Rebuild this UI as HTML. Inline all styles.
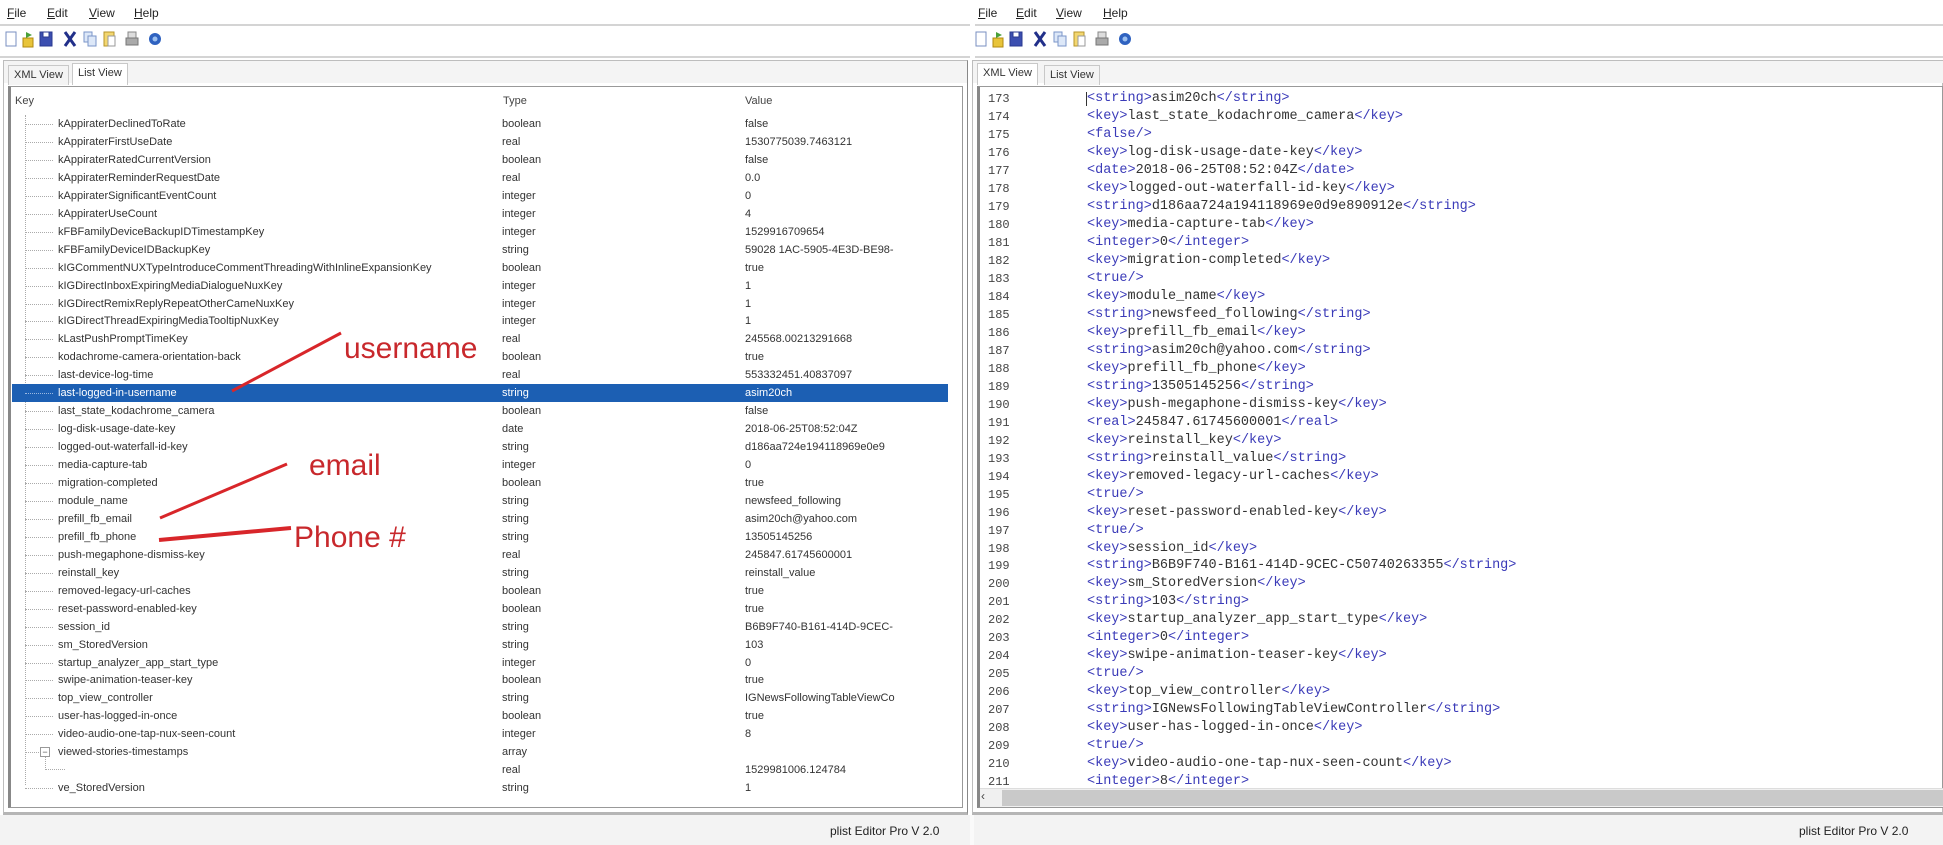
<!DOCTYPE html>
<html><head><meta charset="utf-8">
<style>
*{margin:0;padding:0;box-sizing:border-box}
body{width:1943px;height:845px;background:#fff;position:relative;overflow:hidden;font-family:"Liberation Sans",sans-serif;color:#222}
.abs{position:absolute}
.menu{font-size:12px;color:#222;top:6px}
.menu u{text-decoration:underline}
.sep{height:2px;background:#d4d4d4}
.tab{position:absolute;font-size:11px;height:20px;line-height:18px;padding:0 5px;border:1px solid #c8c8c8;border-bottom:none;background:#f4f4f4;color:#333}
.tab.act{background:#fff}
.row{position:absolute;left:0;height:18px;line-height:18px;font-size:11px;color:#333;white-space:nowrap;width:955px}
.row .k{position:absolute;left:58px}
.row .t{position:absolute;left:502px}
.row .v{position:absolute;left:745px}
.row .ln{position:absolute;left:25px;top:9px;width:28px;border-top:1px dotted #aaa}
.row.sel{background:#1c5fb3;color:#fff;left:12px;width:936px}
.row.sel .k{left:46px}.row.sel .t{left:490px}.row.sel .v{left:733px}.row.sel .ln{left:13px;border-color:#9bb8e0}
.cl{position:absolute;height:18px;line-height:18px;font-family:"Liberation Mono",monospace;font-size:13.5px;white-space:nowrap}
.cl .n{position:absolute;left:0;color:#444;font-size:12px}
.cl .c{position:absolute;left:99px;color:#333}
.g{color:#3a3ab8}
.status{font-size:12px;color:#222}
</style></head><body>

<div class="abs menu" style="left:7px"><u>F</u>ile</div>
<div class="abs menu" style="left:47px"><u>E</u>dit</div>
<div class="abs menu" style="left:89px"><u>V</u>iew</div>
<div class="abs menu" style="left:134px"><u>H</u>elp</div>
<div class="abs sep" style="left:0;top:24px;width:970px"></div>
<div class="abs sep" style="left:0;top:56px;width:970px"></div>

<div class="abs menu" style="left:978px"><u>F</u>ile</div>
<div class="abs menu" style="left:1016px"><u>E</u>dit</div>
<div class="abs menu" style="left:1056px"><u>V</u>iew</div>
<div class="abs menu" style="left:1103px"><u>H</u>elp</div>
<div class="abs sep" style="left:975px;top:24px;width:968px"></div>
<div class="abs sep" style="left:975px;top:56px;width:968px"></div>

<svg class="abs" style="left:0;top:28px" width="1943" height="24">
 <g id="tbg">
  <rect x="6" y="4" width="10" height="14" fill="#fff" stroke="#7a8fc0"/>
  <path d="M23 10 h10 v9 h-10z" fill="#e8c43a" stroke="#b08a10"/><path d="M26 4 l6 3 -6 3z" fill="#4aa03a"/>
  <path d="M40 4 h12 v14 h-12z M43 4 v5 h6 v-5" fill="#3c4fb0" stroke="#2a3a90"/>
  <path d="M65 4 l10 14 M75 4 l-10 14" stroke="#22308a" stroke-width="3"/>
  <rect x="84" y="4" width="8" height="10" fill="#dde8f8" stroke="#7a95c8"/><rect x="88" y="8" width="8" height="10" fill="#dde8f8" stroke="#7a95c8"/>
  <rect x="104" y="4" width="10" height="14" fill="#f3d770" stroke="#b7962a"/><rect x="108" y="8" width="7" height="10" fill="#fff" stroke="#999"/>
  <rect x="128" y="4" width="8" height="6" fill="#ddd" stroke="#888"/><rect x="126" y="10" width="12" height="7" fill="#aaa" stroke="#777"/>
  <circle cx="155" cy="11" r="6" fill="#2f62c0"/><circle cx="155" cy="11" r="2.5" fill="#9cc0f0"/>
 </g>
 <use href="#tbg" x="970"/>
</svg>

<div class="abs" style="left:3px;top:60px;width:965px;height:755px;border:1px solid #bdbdbd;border-right-color:#888;border-bottom:3px solid #b5b5b5"></div>
<div class="abs" style="left:4px;top:61px;width:963px;height:22px;background:#f4f4f4"></div>
<div class="tab" style="left:8px;top:65px">XML View</div>
<div class="tab act" style="left:72px;top:63px;height:22px">List View</div>
<div class="abs" style="left:8px;top:86px;width:955px;height:722px;border:1px solid #999;border-left:3px solid #888;background:#fff"></div>
<div class="abs" style="left:15px;top:95px;font-size:11px;color:#444">Key</div>
<div class="abs" style="left:503px;top:95px;font-size:11px;color:#444">Type</div>
<div class="abs" style="left:745px;top:95px;font-size:11px;color:#444">Value</div>
<div class="abs" style="left:25px;top:115px;width:0;height:670px;border-left:1px dotted #aaa"></div>

<div class="abs" style="left:0;top:115px;width:960px;height:690px">
<div class="row" style="top:0px"><span class="ln"></span><span class="k">kAppiraterDeclinedToRate</span><span class="t">boolean</span><span class="v">false</span></div>
<div class="row" style="top:17.95px"><span class="ln"></span><span class="k">kAppiraterFirstUseDate</span><span class="t">real</span><span class="v">1530775039.7463121</span></div>
<div class="row" style="top:35.9px"><span class="ln"></span><span class="k">kAppiraterRatedCurrentVersion</span><span class="t">boolean</span><span class="v">false</span></div>
<div class="row" style="top:53.85px"><span class="ln"></span><span class="k">kAppiraterReminderRequestDate</span><span class="t">real</span><span class="v">0.0</span></div>
<div class="row" style="top:71.8px"><span class="ln"></span><span class="k">kAppiraterSignificantEventCount</span><span class="t">integer</span><span class="v">0</span></div>
<div class="row" style="top:89.75px"><span class="ln"></span><span class="k">kAppiraterUseCount</span><span class="t">integer</span><span class="v">4</span></div>
<div class="row" style="top:107.7px"><span class="ln"></span><span class="k">kFBFamilyDeviceBackupIDTimestampKey</span><span class="t">integer</span><span class="v">1529916709654</span></div>
<div class="row" style="top:125.65px"><span class="ln"></span><span class="k">kFBFamilyDeviceIDBackupKey</span><span class="t">string</span><span class="v">59028 1AC-5905-4E3D-BE98-</span></div>
<div class="row" style="top:143.6px"><span class="ln"></span><span class="k">kIGCommentNUXTypeIntroduceCommentThreadingWithInlineExpansionKey</span><span class="t">boolean</span><span class="v">true</span></div>
<div class="row" style="top:161.55px"><span class="ln"></span><span class="k">kIGDirectInboxExpiringMediaDialogueNuxKey</span><span class="t">integer</span><span class="v">1</span></div>
<div class="row" style="top:179.5px"><span class="ln"></span><span class="k">kIGDirectRemixReplyRepeatOtherCameNuxKey</span><span class="t">integer</span><span class="v">1</span></div>
<div class="row" style="top:197.45px"><span class="ln"></span><span class="k">kIGDirectThreadExpiringMediaTooltipNuxKey</span><span class="t">integer</span><span class="v">1</span></div>
<div class="row" style="top:215.4px"><span class="ln"></span><span class="k">kLastPushPromptTimeKey</span><span class="t">real</span><span class="v">245568.00213291668</span></div>
<div class="row" style="top:233.35px"><span class="ln"></span><span class="k">kodachrome-camera-orientation-back</span><span class="t">boolean</span><span class="v">true</span></div>
<div class="row" style="top:251.3px"><span class="ln"></span><span class="k">last-device-log-time</span><span class="t">real</span><span class="v">553332451.40837097</span></div>
<div class="row sel" style="top:269.25px"><span class="ln"></span><span class="k">last-logged-in-username</span><span class="t">string</span><span class="v">asim20ch</span></div>
<div class="row" style="top:287.2px"><span class="ln"></span><span class="k">last_state_kodachrome_camera</span><span class="t">boolean</span><span class="v">false</span></div>
<div class="row" style="top:305.15px"><span class="ln"></span><span class="k">log-disk-usage-date-key</span><span class="t">date</span><span class="v">2018-06-25T08:52:04Z</span></div>
<div class="row" style="top:323.1px"><span class="ln"></span><span class="k">logged-out-waterfall-id-key</span><span class="t">string</span><span class="v">d186aa724e194118969e0e9</span></div>
<div class="row" style="top:341.05px"><span class="ln"></span><span class="k">media-capture-tab</span><span class="t">integer</span><span class="v">0</span></div>
<div class="row" style="top:359px"><span class="ln"></span><span class="k">migration-completed</span><span class="t">boolean</span><span class="v">true</span></div>
<div class="row" style="top:376.95px"><span class="ln"></span><span class="k">module_name</span><span class="t">string</span><span class="v">newsfeed_following</span></div>
<div class="row" style="top:394.9px"><span class="ln"></span><span class="k">prefill_fb_email</span><span class="t">string</span><span class="v">asim20ch@yahoo.com</span></div>
<div class="row" style="top:412.85px"><span class="ln"></span><span class="k">prefill_fb_phone</span><span class="t">string</span><span class="v">13505145256</span></div>
<div class="row" style="top:430.8px"><span class="ln"></span><span class="k">push-megaphone-dismiss-key</span><span class="t">real</span><span class="v">245847.61745600001</span></div>
<div class="row" style="top:448.75px"><span class="ln"></span><span class="k">reinstall_key</span><span class="t">string</span><span class="v">reinstall_value</span></div>
<div class="row" style="top:466.7px"><span class="ln"></span><span class="k">removed-legacy-url-caches</span><span class="t">boolean</span><span class="v">true</span></div>
<div class="row" style="top:484.65px"><span class="ln"></span><span class="k">reset-password-enabled-key</span><span class="t">boolean</span><span class="v">true</span></div>
<div class="row" style="top:502.6px"><span class="ln"></span><span class="k">session_id</span><span class="t">string</span><span class="v">B6B9F740-B161-414D-9CEC-</span></div>
<div class="row" style="top:520.55px"><span class="ln"></span><span class="k">sm_StoredVersion</span><span class="t">string</span><span class="v">103</span></div>
<div class="row" style="top:538.5px"><span class="ln"></span><span class="k">startup_analyzer_app_start_type</span><span class="t">integer</span><span class="v">0</span></div>
<div class="row" style="top:556.45px"><span class="ln"></span><span class="k">swipe-animation-teaser-key</span><span class="t">boolean</span><span class="v">true</span></div>
<div class="row" style="top:574.4px"><span class="ln"></span><span class="k">top_view_controller</span><span class="t">string</span><span class="v">IGNewsFollowingTableViewCo</span></div>
<div class="row" style="top:592.35px"><span class="ln"></span><span class="k">user-has-logged-in-once</span><span class="t">boolean</span><span class="v">true</span></div>
<div class="row" style="top:610.3px"><span class="ln"></span><span class="k">video-audio-one-tap-nux-seen-count</span><span class="t">integer</span><span class="v">8</span></div>
<div class="row" style="top:628.25px"><span class="ln" style="width:14px"></span><span class="abs" style="left:40px;top:4px;width:10px;height:10px;border:1px solid #999;font-size:9px;line-height:8px;text-align:center;color:#555">−</span><span class="k">viewed-stories-timestamps</span><span class="t">array</span><span class="v"></span></div>
<div class="row" style="top:646.2px"><span class="abs" style="left:45px;top:-4px;width:20px;height:13px;border-left:1px dotted #aaa;border-bottom:1px dotted #aaa"></span><span class="t">real</span><span class="v">1529981006.124784</span></div>
<div class="row" style="top:664.15px"><span class="ln"></span><span class="k">ve_StoredVersion</span><span class="t">string</span><span class="v">1</span></div>
</div>

<svg class="abs" style="left:0;top:0" width="970" height="845">
 <line x1="232" y1="391" x2="341" y2="333" stroke="#d8262a" stroke-width="3"/>
 <line x1="160" y1="518" x2="287" y2="464" stroke="#d8262a" stroke-width="3"/>
 <line x1="159" y1="540" x2="291" y2="528" stroke="#d8262a" stroke-width="4"/>
 <text x="344" y="358" font-family="Liberation Sans, sans-serif" font-size="30" fill="#c8282c">username</text>
 <text x="309" y="475" font-family="Liberation Sans, sans-serif" font-size="30" fill="#c8282c">email</text>
 <text x="294" y="547" font-family="Liberation Sans, sans-serif" font-size="30" fill="#c8282c">Phone #</text>
</svg>

<div class="abs" style="left:972px;top:60px;width:971px;height:755px;border:1px solid #bdbdbd;border-bottom:3px solid #b5b5b5"></div>
<div class="abs" style="left:973px;top:61px;width:970px;height:22px;background:#f4f4f4"></div>
<div class="tab act" style="left:977px;top:63px;height:22px">XML View</div>
<div class="tab" style="left:1044px;top:65px">List View</div>
<div class="abs" style="left:977px;top:86px;width:966px;height:722px;border:1px solid #999;border-left:3px solid #888;background:#fff"></div>
<div class="abs" style="left:1086px;top:92px;width:1px;height:14px;background:#333"></div>

<div class="abs" style="left:988px;top:90px;width:950px;height:698px;overflow:hidden">
<div class="cl" style="top:0px"><span class="n">173</span><span class="c"><span class="g">&lt;string&gt;</span>asim20ch<span class="g">&lt;/string&gt;</span></span></div>
<div class="cl" style="top:17.98px"><span class="n">174</span><span class="c"><span class="g">&lt;key&gt;</span>last_state_kodachrome_camera<span class="g">&lt;/key&gt;</span></span></div>
<div class="cl" style="top:35.96px"><span class="n">175</span><span class="c"><span class="g">&lt;false/&gt;</span></span></div>
<div class="cl" style="top:53.94px"><span class="n">176</span><span class="c"><span class="g">&lt;key&gt;</span>log-disk-usage-date-key<span class="g">&lt;/key&gt;</span></span></div>
<div class="cl" style="top:71.92px"><span class="n">177</span><span class="c"><span class="g">&lt;date&gt;</span>2018-06-25T08:52:04Z<span class="g">&lt;/date&gt;</span></span></div>
<div class="cl" style="top:89.9px"><span class="n">178</span><span class="c"><span class="g">&lt;key&gt;</span>logged-out-waterfall-id-key<span class="g">&lt;/key&gt;</span></span></div>
<div class="cl" style="top:107.88px"><span class="n">179</span><span class="c"><span class="g">&lt;string&gt;</span>d186aa724a194118969e0d9e890912e<span class="g">&lt;/string&gt;</span></span></div>
<div class="cl" style="top:125.86px"><span class="n">180</span><span class="c"><span class="g">&lt;key&gt;</span>media-capture-tab<span class="g">&lt;/key&gt;</span></span></div>
<div class="cl" style="top:143.84px"><span class="n">181</span><span class="c"><span class="g">&lt;integer&gt;</span>0<span class="g">&lt;/integer&gt;</span></span></div>
<div class="cl" style="top:161.82px"><span class="n">182</span><span class="c"><span class="g">&lt;key&gt;</span>migration-completed<span class="g">&lt;/key&gt;</span></span></div>
<div class="cl" style="top:179.8px"><span class="n">183</span><span class="c"><span class="g">&lt;true/&gt;</span></span></div>
<div class="cl" style="top:197.78px"><span class="n">184</span><span class="c"><span class="g">&lt;key&gt;</span>module_name<span class="g">&lt;/key&gt;</span></span></div>
<div class="cl" style="top:215.76px"><span class="n">185</span><span class="c"><span class="g">&lt;string&gt;</span>newsfeed_following<span class="g">&lt;/string&gt;</span></span></div>
<div class="cl" style="top:233.74px"><span class="n">186</span><span class="c"><span class="g">&lt;key&gt;</span>prefill_fb_email<span class="g">&lt;/key&gt;</span></span></div>
<div class="cl" style="top:251.72px"><span class="n">187</span><span class="c"><span class="g">&lt;string&gt;</span>asim20ch@yahoo.com<span class="g">&lt;/string&gt;</span></span></div>
<div class="cl" style="top:269.7px"><span class="n">188</span><span class="c"><span class="g">&lt;key&gt;</span>prefill_fb_phone<span class="g">&lt;/key&gt;</span></span></div>
<div class="cl" style="top:287.68px"><span class="n">189</span><span class="c"><span class="g">&lt;string&gt;</span>13505145256<span class="g">&lt;/string&gt;</span></span></div>
<div class="cl" style="top:305.66px"><span class="n">190</span><span class="c"><span class="g">&lt;key&gt;</span>push-megaphone-dismiss-key<span class="g">&lt;/key&gt;</span></span></div>
<div class="cl" style="top:323.64px"><span class="n">191</span><span class="c"><span class="g">&lt;real&gt;</span>245847.61745600001<span class="g">&lt;/real&gt;</span></span></div>
<div class="cl" style="top:341.62px"><span class="n">192</span><span class="c"><span class="g">&lt;key&gt;</span>reinstall_key<span class="g">&lt;/key&gt;</span></span></div>
<div class="cl" style="top:359.6px"><span class="n">193</span><span class="c"><span class="g">&lt;string&gt;</span>reinstall_value<span class="g">&lt;/string&gt;</span></span></div>
<div class="cl" style="top:377.58px"><span class="n">194</span><span class="c"><span class="g">&lt;key&gt;</span>removed-legacy-url-caches<span class="g">&lt;/key&gt;</span></span></div>
<div class="cl" style="top:395.56px"><span class="n">195</span><span class="c"><span class="g">&lt;true/&gt;</span></span></div>
<div class="cl" style="top:413.54px"><span class="n">196</span><span class="c"><span class="g">&lt;key&gt;</span>reset-password-enabled-key<span class="g">&lt;/key&gt;</span></span></div>
<div class="cl" style="top:431.52px"><span class="n">197</span><span class="c"><span class="g">&lt;true/&gt;</span></span></div>
<div class="cl" style="top:449.5px"><span class="n">198</span><span class="c"><span class="g">&lt;key&gt;</span>session_id<span class="g">&lt;/key&gt;</span></span></div>
<div class="cl" style="top:467.48px"><span class="n">199</span><span class="c"><span class="g">&lt;string&gt;</span>B6B9F740-B161-414D-9CEC-C50740263355<span class="g">&lt;/string&gt;</span></span></div>
<div class="cl" style="top:485.46px"><span class="n">200</span><span class="c"><span class="g">&lt;key&gt;</span>sm_StoredVersion<span class="g">&lt;/key&gt;</span></span></div>
<div class="cl" style="top:503.44px"><span class="n">201</span><span class="c"><span class="g">&lt;string&gt;</span>103<span class="g">&lt;/string&gt;</span></span></div>
<div class="cl" style="top:521.42px"><span class="n">202</span><span class="c"><span class="g">&lt;key&gt;</span>startup_analyzer_app_start_type<span class="g">&lt;/key&gt;</span></span></div>
<div class="cl" style="top:539.4px"><span class="n">203</span><span class="c"><span class="g">&lt;integer&gt;</span>0<span class="g">&lt;/integer&gt;</span></span></div>
<div class="cl" style="top:557.38px"><span class="n">204</span><span class="c"><span class="g">&lt;key&gt;</span>swipe-animation-teaser-key<span class="g">&lt;/key&gt;</span></span></div>
<div class="cl" style="top:575.36px"><span class="n">205</span><span class="c"><span class="g">&lt;true/&gt;</span></span></div>
<div class="cl" style="top:593.34px"><span class="n">206</span><span class="c"><span class="g">&lt;key&gt;</span>top_view_controller<span class="g">&lt;/key&gt;</span></span></div>
<div class="cl" style="top:611.32px"><span class="n">207</span><span class="c"><span class="g">&lt;string&gt;</span>IGNewsFollowingTableViewController<span class="g">&lt;/string&gt;</span></span></div>
<div class="cl" style="top:629.3px"><span class="n">208</span><span class="c"><span class="g">&lt;key&gt;</span>user-has-logged-in-once<span class="g">&lt;/key&gt;</span></span></div>
<div class="cl" style="top:647.28px"><span class="n">209</span><span class="c"><span class="g">&lt;true/&gt;</span></span></div>
<div class="cl" style="top:665.26px"><span class="n">210</span><span class="c"><span class="g">&lt;key&gt;</span>video-audio-one-tap-nux-seen-count<span class="g">&lt;/key&gt;</span></span></div>
<div class="cl" style="top:683.24px"><span class="n">211</span><span class="c"><span class="g">&lt;integer&gt;</span>8<span class="g">&lt;/integer&gt;</span></span></div>
</div>
<div class="abs" style="left:980px;top:788px;width:963px;height:19px;background:#f0f0f0;border-top:1px solid #ddd"></div>
<div class="abs" style="left:981px;top:789px;font-size:12px;color:#444">&lsaquo;</div>
<div class="abs" style="left:1002px;top:790px;width:941px;height:16px;background:#c9c9c9"></div>

<div class="abs" style="left:0;top:815px;width:1943px;height:30px;background:#f3f3f3"></div>
<div class="abs" style="left:970px;top:815px;width:4px;height:30px;background:#fafafa"></div>
<div class="abs status" style="left:830px;top:824px">plist Editor Pro V 2.0</div>
<div class="abs status" style="left:1799px;top:824px">plist Editor Pro V 2.0</div>
</body></html>
